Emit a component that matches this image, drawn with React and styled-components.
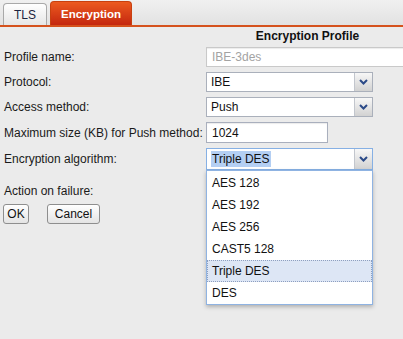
import styled, { createGlobalStyle } from 'styled-components';

const GlobalStyle = createGlobalStyle`
  body {
    margin: 0;
    background: #ebebeb;
    font-family: "Liberation Sans", Arial, sans-serif;
    font-size: 12px;
    color: #1a1a1a;
    overflow: hidden;
  }
`;

const Page = styled.div`
  width: 403px;
  height: 339px;
  background: #ebebeb;
  overflow: hidden;
`;

const TabBar = styled.div`
  height: 25px;
  display: flex;
  align-items: flex-end;
  gap: 3px;
  padding-left: 3px;
  background: linear-gradient(#f0f0f0, #e2e2e2);
  border-bottom: 2px solid #d5521d;
`;

const Tab = styled.div`
  height: ${p => (p.$active ? '23px' : '21px')};
  padding: 0 ${p => (p.$active ? '10px' : '10px')};
  display: flex;
  align-items: center;
  border-radius: 4px 4px 0 0;
  font-size: ${p => (p.$active ? '11.5px' : '12px')};
  font-weight: ${p => (p.$active ? 700 : 400)};
  color: ${p => (p.$active ? '#fff' : '#1c2440')};
  background: ${p =>
    p.$active
      ? 'linear-gradient(#ec5a1f, #c4270f)'
      : 'linear-gradient(#ffffff, #e6e6e6)'};
  border: 1px solid ${p => (p.$active ? '#c8400f' : '#a9a9a9')};
  border-bottom: none;
`;

const Form = styled.div`
  display: grid;
  grid-template-columns: 202px 1fr;
  row-gap: 5px;
  align-items: center;
  padding-left: 4px;
`;

const Title = styled.div`
  grid-column: 2;
  height: 15px;
  line-height: 18px;
  text-align: center;
  font-weight: 700;
  font-size: 12px;
  color: #111;
  padding-right: 2px;
`;

const Label = styled.div`
  font-size: 12px;
  color: #1a1a1a;
  white-space: nowrap;
  padding-top: ${p => p.$offset || 0}px;
`;

const Cell = styled.div`
  padding-top: ${p => p.$offset || 0}px;
`;

const TextBox = styled.div`
  box-sizing: border-box;
  height: ${p => p.$h || 20}px;
  width: ${p => p.$w || 167}px;
  background: #fff;
  border: 1px solid ${p => (p.$disabled ? '#c9c9c9' : '#a9afbd')};
  box-shadow: inset 0 1px 1px rgba(0, 0, 0, 0.08);
  padding-left: 5px;
  display: flex;
  align-items: center;
  font-size: 12px;
  color: ${p => (p.$disabled ? '#a3a3a3' : '#111')};
`;

const SelectWrap = styled.div`
  position: relative;
  width: 167px;
`;

const Select = styled.div`
  box-sizing: border-box;
  height: ${p => (p.$focus ? 22 : 20)}px;
  width: 167px;
  background: #fff;
  border: 1px solid ${p => (p.$focus ? '#86b0e4' : '#aab0bb')};
  display: flex;
  align-items: stretch;
  font-size: 12px;
  color: #111;
`;

const SelectValue = styled.div`
  flex: 1;
  display: flex;
  align-items: center;
  padding-left: 4px;
`;

const Highlight = styled.span`
  background: #b4cff3;
  padding: 1px 1px;
`;

const SelectButton = styled.div`
  width: 17px;
  display: flex;
  align-items: center;
  justify-content: center;
  border-left: 1px solid #c2c6cd;
  background: linear-gradient(#f7f7f7, #d2d2d2);
`;

const List = styled.div`
  position: absolute;
  top: 100%;
  left: 0;
  width: 167px;
  box-sizing: border-box;
  background: #fff;
  border: 1px solid #8fb3e2;
  box-shadow: 0 2px 4px rgba(0, 0, 0, 0.25);
  padding-top: 1px;
  z-index: 5;
`;

const Item = styled.div`
  box-sizing: border-box;
  height: 22px;
  display: flex;
  align-items: center;
  padding-left: 4px;
  font-size: 12px;
  color: #111;
  background: ${p => (p.$selected ? '#dde6f5' : 'transparent')};
  border: 1px dotted ${p => (p.$selected ? '#8e9fbf' : 'transparent')};
`;

const ButtonRow = styled.div`
  display: flex;
  gap: 18px;
  padding: 3px 0 0 3px;
`;

const Button = styled.div`
  box-sizing: border-box;
  height: 20px;
  width: ${p => p.$w}px;
  display: flex;
  align-items: center;
  justify-content: center;
  border: 1px solid #8e8e8e;
  border-radius: 3px;
  background: linear-gradient(#ffffff, #e4e4e4);
  font-size: 12px;
  color: #111;
`;

const Chevron = () => (
  <svg width="9" height="6" viewBox="0 0 9 6">
    <path d="M1 1 L4.5 4.5 L8 1" fill="none" stroke="#2b4a88" strokeWidth="2" />
  </svg>
);

const Dropdown = ({ value, focus, children }) => (
  <SelectWrap>
    <Select $focus={focus}>
      <SelectValue>{focus ? <Highlight>{value}</Highlight> : value}</SelectValue>
      <SelectButton>
        <Chevron />
      </SelectButton>
    </Select>
    {children}
  </SelectWrap>
);

const algorithms = ['AES 128', 'AES 192', 'AES 256', 'CAST5 128', 'Triple DES', 'DES'];

export default function App() {
  return (
    <Page>
      <GlobalStyle />
      <TabBar>
        <Tab>TLS</Tab>
        <Tab $active>Encryption</Tab>
      </TabBar>
      <Form>
        <Title>Encryption Profile</Title>

        <Label>Profile name:</Label>
        <TextBox $disabled $w={205}>IBE-3des</TextBox>

        <Label>Protocol:</Label>
        <Dropdown value="IBE" />

        <Label>Access method:</Label>
        <Dropdown value="Push" />

        <Label>Maximum size (KB) for Push method:</Label>
        <TextBox $w={122} $h={21}>1024</TextBox>

        <Label>Encryption algorithm:</Label>
        <Dropdown value="Triple DES" focus>
          <List>
            {algorithms.map(a => (
              <Item key={a} $selected={a === 'Triple DES'}>{a}</Item>
            ))}
          </List>
        </Dropdown>

        <Label $offset={6}>Action on failure:</Label>
        <Cell $offset={6}>
          <Dropdown value="" />
        </Cell>
      </Form>
      <ButtonRow>
        <Button $w={26}>OK</Button>
        <Button $w={53}>Cancel</Button>
      </ButtonRow>
    </Page>
  );
}
